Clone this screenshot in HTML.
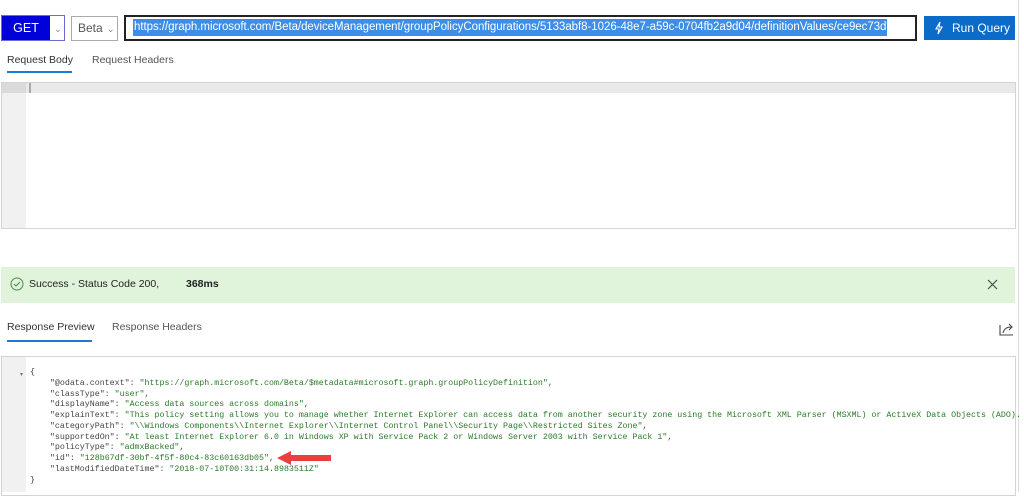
<!DOCTYPE html>
<html><head><style>
*{margin:0;padding:0;box-sizing:border-box}
body{width:1024px;height:492px;overflow:hidden;background:#fff;font-family:"Liberation Sans",sans-serif;position:relative;color:#333}
.a{position:absolute}
.mono{font-family:"Liberation Mono",monospace;font-size:8.3px;line-height:10.75px;white-space:pre;color:#444}
.g{color:#2a7a2a}
</style></head><body>
<div class="a" style="left:1018px;top:0;width:1px;height:492px;background:#ddd"></div>
<div class="a" style="left:1px;top:15px;width:64px;height:26px;border:1px solid #6b6bd6;background:#fff"></div>
<div class="a" style="left:2px;top:16px;width:48px;height:24px;background:#0000d8;color:#fff;font-size:12.5px;line-height:24px;text-align:center">GET</div>
<div class="a" style="left:52px;top:16px;width:12px;height:24px;color:#888;font-size:9px;line-height:26px;text-align:center">&#8964;</div>
<div class="a" style="left:71px;top:16px;width:47px;height:25px;border:1px solid #aaa;font-size:12px;line-height:23px;padding-left:6px;color:#555">Beta<span style="position:absolute;left:35px;top:1px;font-size:9px;color:#888">&#8964;</span></div>
<div class="a" style="left:124px;top:15px;width:793px;height:26px;border:2px solid #222;background:#fff;overflow:hidden"></div>
<div class="a" style="left:133px;top:19px;height:17px;max-width:780px;overflow:hidden;background:#3d8ee8;color:#fff;font-size:11.5px;line-height:17px;padding:0 1px;white-space:nowrap;letter-spacing:-0.05px">https://graph.microsoft.com/Beta/deviceManagement/groupPolicyConfigurations/5133abf8-1026-48e7-a59c-0704fb2a9d04/definitionValues/ce9ec73d</div>
<div class="a" style="left:924px;top:16px;width:91px;height:24px;background:#0a6cc8;color:#fff;font-size:12px;line-height:24px;padding-left:28px;white-space:nowrap">Run Query</div>
<svg class="a" style="left:933px;top:21px" width="12" height="14" viewBox="0 0 12 14"><path d="M7 1L3 8h3l-1 5 4-7H6z" fill="none" stroke="#fff" stroke-width="1.1"/></svg>
<div class="a" style="left:7px;top:54px;font-size:10.5px;color:#333">Request Body</div>
<div class="a" style="left:7px;top:71px;width:65px;height:2px;background:#1a7ad4"></div>
<div class="a" style="left:92px;top:54px;font-size:10.5px;color:#555">Request Headers</div>
<div class="a" style="left:1px;top:82px;width:1015px;height:147px;border:1px solid #d4d4d4;background:#fff"></div>
<div class="a" style="left:2px;top:83px;width:24px;height:145px;background:#f1f1f1"></div>
<div class="a" style="left:2px;top:83px;width:1013px;height:10px;background:#e9e9e9"></div>
<div class="a" style="left:2px;top:83px;width:24px;height:10px;background:#dadada"></div>
<div class="a" style="left:29px;top:83px;width:2px;height:10px;background:#aaa"></div>
<div class="a" style="left:1px;top:267px;width:1014px;height:36px;background:#dff4da"></div>
<svg class="a" style="left:10px;top:277px" width="14" height="14" viewBox="0 0 14 14"><circle cx="7" cy="7" r="6" fill="none" stroke="#4a8a4a" stroke-width="1"/><path d="M4 7l2 2 4-4" fill="none" stroke="#4a8a4a" stroke-width="1"/></svg>
<div class="a" style="left:29px;top:278px;font-size:10.5px;color:#222">Success - Status Code 200,</div>
<div class="a" style="left:186px;top:278px;font-size:10.5px;color:#222;font-weight:bold">368ms</div>
<svg class="a" style="left:987px;top:279px" width="11" height="11" viewBox="0 0 11 11"><path d="M1 1l9 9M10 1l-9 9" stroke="#444" stroke-width="1.1"/></svg>
<div class="a" style="left:7px;top:321px;font-size:10.5px;color:#333">Response Preview</div>
<div class="a" style="left:7px;top:340px;width:85px;height:2px;background:#1a7ad4"></div>
<div class="a" style="left:112px;top:321px;font-size:10.5px;color:#555">Response Headers</div>
<svg class="a" style="left:999px;top:322px" width="16" height="14" viewBox="0 0 16 14"><path d="M1 3v10h13M4 11c1-4 4-6 8-6M10 2l3 3-3 3" fill="none" stroke="#444" stroke-width="1.1"/></svg>
<div class="a" style="left:1px;top:356px;width:1015px;height:140px;border:1px solid #d4d4d4;background:#fff"></div>
<div class="a" style="left:2px;top:357px;width:24px;height:135px;background:#f1f1f1"></div>
<div class="a" style="left:20px;top:371px;font-size:6px;color:#777">&#9662;</div>
<div class="a mono" style="left:30px;top:368px">{
    "@odata.context": <span class="g">"https://graph.microsoft.com/Beta/$metadata#microsoft.graph.groupPolicyDefinition"</span>,
    "classType": <span class="g">"user"</span>,
    "displayName": <span class="g">"Access data sources across domains"</span>,
    "explainText": <span class="g">"This policy setting allows you to manage whether Internet Explorer can access data from another security zone using the Microsoft XML Parser (MSXML) or ActiveX Data Objects (ADO).</span>
    "categoryPath": <span class="g">"\\Windows Components\\Internet Explorer\\Internet Control Panel\\Security Page\\Restricted Sites Zone"</span>,
    "supportedOn": <span class="g">"At least Internet Explorer 6.0 in Windows XP with Service Pack 2 or Windows Server 2003 with Service Pack 1"</span>,
    "policyType": <span class="g">"admxBacked"</span>,
    "id": <span class="g">"128b67df-30bf-4f5f-80c4-83c60163db05"</span>,
    "lastModifiedDateTime": <span class="g">"2018-07-10T00:31:14.8983511Z"</span>
}</div>
<svg class="a" style="left:275px;top:448px" width="60" height="20" viewBox="0 0 60 20"><path d="M2 10L16 3v4h40v6H16v4z" fill="#e84040"/></svg>
</body></html>
